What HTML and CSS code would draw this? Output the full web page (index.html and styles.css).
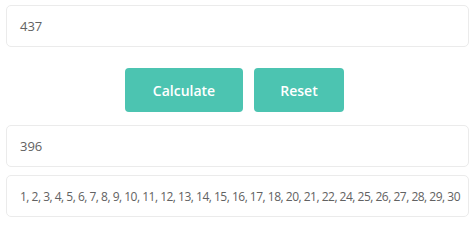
FILE: index.html
```html
<!DOCTYPE html>
<html>
<head>
<meta charset="utf-8">
<link rel="stylesheet" href="styles.css">
</head>
<body>
<div class="wrap">
  <div class="field">437</div>
  <div class="actions">
    <button class="btn btn-calc">Calculate</button>
    <button class="btn btn-reset">Reset</button>
  </div>
  <div class="field field-result">396</div>
  <div class="field field-list">1, 2, 3, 4, 5, 6, 7, 8, 9, 10, 11, 12, 13, 14, 15, 16, 17, 18, 20, 21, 22, 24, 25, 26, 27, 28, 29, 30</div>
</div>
</body>
</html>
```
FILE: styles.css
```css
html, body {
  margin: 0;
  padding: 0;
  background: #ffffff;
}
body {
  font-family: "Open Sans", "Noto Sans", sans-serif;
  color: #626262;
}
.wrap {
  padding: 5px 5px 0 6px;
  display: flex;
  flex-direction: column;
}
.field {
  box-sizing: border-box;
  height: 42px;
  border: 1px solid #ebebeb;
  border-radius: 5px;
  display: flex;
  align-items: center;
  padding: 0 13px;
  font-size: 13px;
  white-space: nowrap;
  overflow: hidden;
}
.actions {
  display: flex;
  justify-content: center;
  gap: 11px;
  margin: 21px 0 13px;
  padding-right: 6px;
}
.btn {
  box-sizing: border-box;
  height: 44px;
  border: none;
  border-radius: 4px;
  background: #4cc4b1;
  color: #ffffff;
  font-family: "Open Sans", "Noto Sans", sans-serif;
  font-weight: 600;
  font-size: 14px;
  padding: 0;
}
.btn-calc { width: 118px; }
.btn-reset { width: 90px; }
.field-list {
  margin-top: 8px;
  font-size: 12px;
  letter-spacing: -0.5px;
}
```
